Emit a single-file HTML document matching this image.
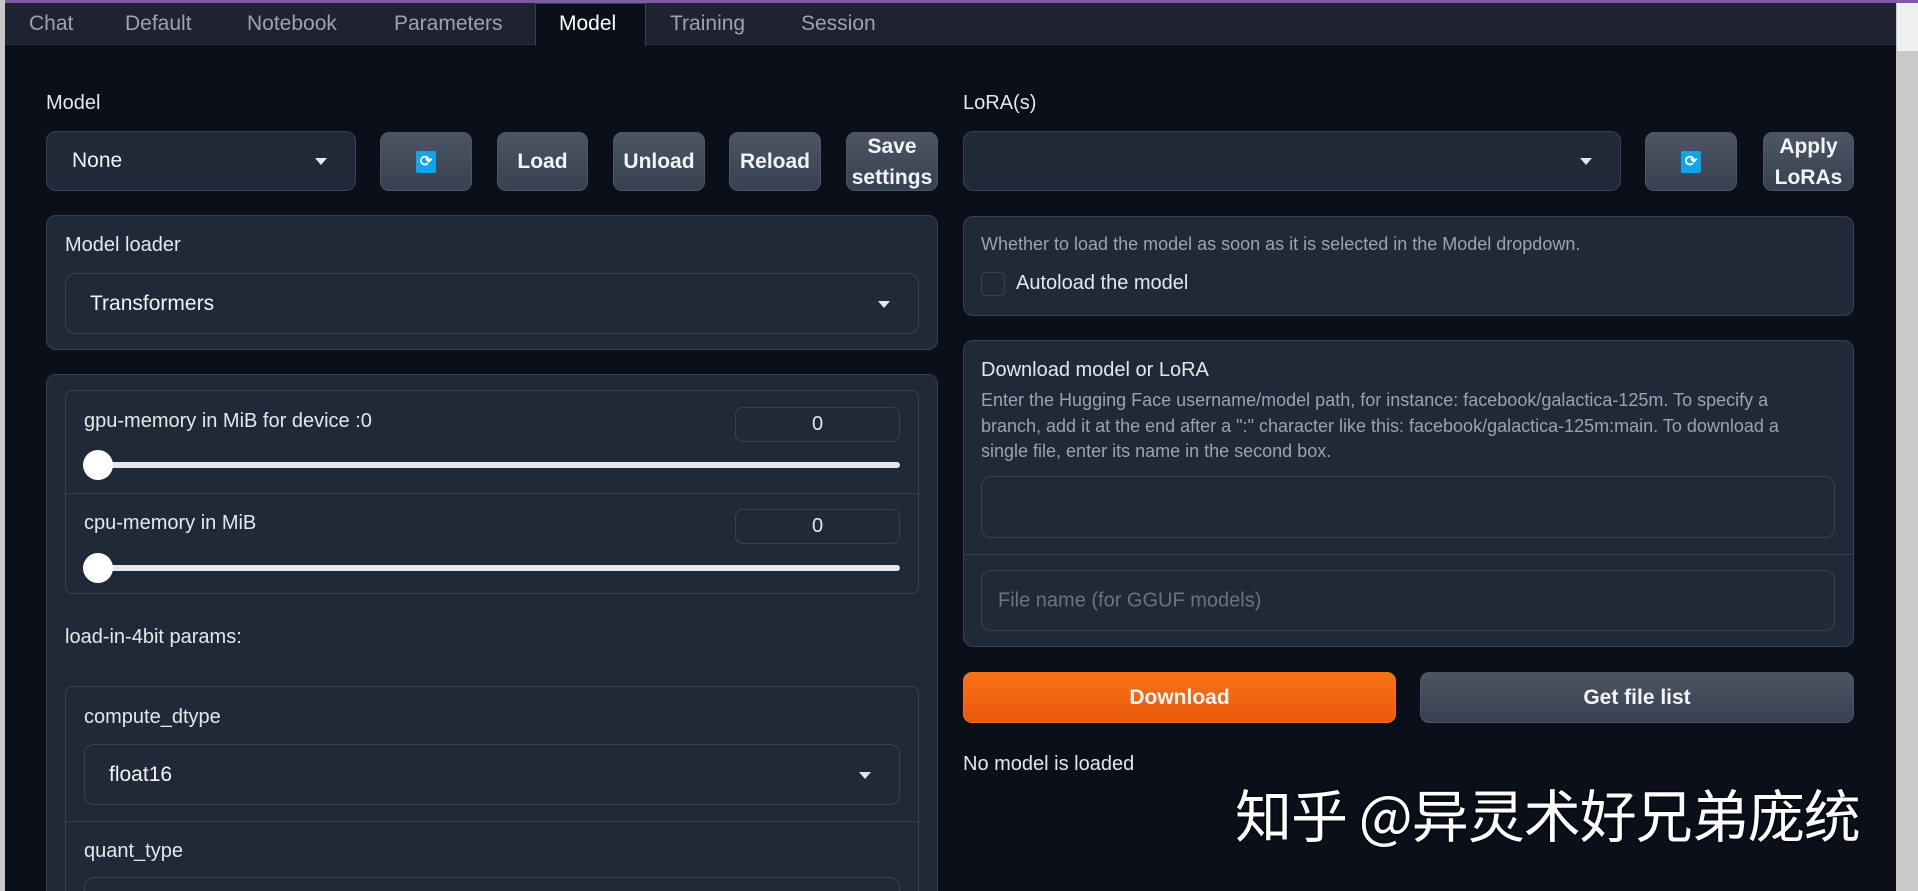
<!DOCTYPE html>
<html style="overflow:hidden;width:1918px;height:891px"><head><meta charset="utf-8"><style>
*{box-sizing:border-box;margin:0;padding:0}
body{width:1918px;height:891px;overflow:hidden;background:#0b0f19;font-family:"Liberation Sans","Noto Sans CJK SC",sans-serif;color:#e5e7eb;position:relative}
.a{position:absolute}
.tabs{left:5px;top:3px;width:1891px;height:42px;background:#1f2230;border-bottom:1px solid #2a2f3d}
.tab{position:absolute;top:12px;font-size:21px;color:#9ca3af}
.panel{position:absolute;background:#1f2937;border:1px solid #374151;border-radius:10px}
.dd{position:absolute;background:#1f2937;border:1px solid #374151;border-radius:10px;font-size:21px;color:#f3f4f6}
.dd span{position:absolute;top:50%;transform:translateY(-50%)}
.arr{position:absolute;right:28px;top:50%;margin-top:-3px;width:0;height:0;border-left:6px solid transparent;border-right:6px solid transparent;border-top:7px solid #e5e7eb}
.btn{position:absolute;border-radius:9px;background:linear-gradient(180deg,#4b5563,#374151);border:1px solid #4b5563;color:#f3f4f6;font-weight:bold;font-size:21px;display:flex;align-items:center;justify-content:center;text-align:center;line-height:31px}
.ref{width:20px;height:22px;background:#0ea5e9;border-radius:2px;color:#fff;font-size:15px;line-height:22px;text-align:center}
.lbl{position:absolute;font-size:20px;color:#e5e7eb}
.num{position:absolute;border:1px solid #374151;border-radius:8px;font-size:20px;text-align:center;line-height:33px;background:#1f2937}
.track{position:absolute;height:6px;background:#e5e7eb;border-radius:3px}
.thumb{position:absolute;width:30px;height:30px;border-radius:50%;background:#fff}
</style></head><body>
<div class="a" style="left:0;top:0;width:1918px;height:3px;background:#7c5aa6"></div>
<div class="a" style="left:0;top:0;width:5px;height:891px;background:#c8c8c8"></div>
<div class="a" style="left:1896px;top:3px;width:22px;height:888px;background:#c9c9c9"></div>
<div class="a" style="left:1897px;top:3px;width:21px;height:48px;background:#f0f0f0"></div>
<div class="a tabs"></div>
<div class="a" style="left:535px;top:3px;width:111px;height:43px;background:#0b0f19;border:1px solid #374151;border-bottom:none"></div>
<div class="tab" style="left:29px">Chat</div>
<div class="tab" style="left:125px">Default</div>
<div class="tab" style="left:247px">Notebook</div>
<div class="tab" style="left:394px">Parameters</div>
<div class="tab" style="left:559px;color:#fff">Model</div>
<div class="tab" style="left:670px">Training</div>
<div class="tab" style="left:801px">Session</div>

<div class="lbl" style="left:46px;top:92px">Model</div>
<div class="dd" style="left:46px;top:131px;width:310px;height:60px"><span style="left:25px">None</span><div class="arr"></div></div>
<div class="btn" style="left:380px;top:132px;width:92px;height:59px"><div class="ref">⟳</div></div>
<div class="btn" style="left:497px;top:132px;width:91px;height:59px">Load</div>
<div class="btn" style="left:613px;top:132px;width:92px;height:59px">Unload</div>
<div class="btn" style="left:729px;top:132px;width:92px;height:59px">Reload</div>
<div class="btn" style="left:846px;top:132px;width:92px;height:59px">Save<br>settings</div>

<div class="panel" style="left:46px;top:215px;width:892px;height:135px"></div>
<div class="lbl" style="left:65px;top:234px">Model loader</div>
<div class="dd" style="left:65px;top:273px;width:854px;height:61px"><span style="left:24px">Transformers</span><div class="arr"></div></div>

<div class="panel" style="left:46px;top:374px;width:892px;height:517px;border-bottom:none;border-radius:10px 10px 0 0"></div>
<div class="panel" style="left:65px;top:390px;width:854px;height:204px;border-radius:8px"></div>
<div class="a" style="left:65px;top:493px;width:854px;height:1px;background:#374151"></div>
<div class="lbl" style="left:84px;top:410px">gpu-memory in MiB for device :0</div>
<div class="num" style="left:735px;top:407px;width:165px;height:35px">0</div>
<div class="track" style="left:90px;top:462px;width:810px"></div>
<div class="thumb" style="left:83px;top:450px"></div>
<div class="lbl" style="left:84px;top:512px">cpu-memory in MiB</div>
<div class="num" style="left:735px;top:509px;width:165px;height:35px">0</div>
<div class="track" style="left:90px;top:565px;width:810px"></div>
<div class="thumb" style="left:83px;top:553px"></div>
<div class="lbl" style="left:65px;top:626px">load-in-4bit params:</div>
<div class="panel" style="left:65px;top:686px;width:854px;height:205px;border-bottom:none;border-radius:8px 8px 0 0"></div>
<div class="a" style="left:65px;top:821px;width:854px;height:1px;background:#374151"></div>
<div class="lbl" style="left:84px;top:706px">compute_dtype</div>
<div class="dd" style="left:84px;top:744px;width:816px;height:61px"><span style="left:24px">float16</span><div class="arr"></div></div>
<div class="lbl" style="left:84px;top:840px">quant_type</div>
<div class="dd" style="left:84px;top:877px;width:816px;height:14px;border-bottom:none;border-radius:10px 10px 0 0"></div>

<div class="lbl" style="left:963px;top:92px">LoRA(s)</div>
<div class="dd" style="left:963px;top:131px;width:658px;height:60px"><div class="arr"></div></div>
<div class="btn" style="left:1645px;top:132px;width:92px;height:59px"><div class="ref">⟳</div></div>
<div class="btn" style="left:1763px;top:132px;width:91px;height:59px">Apply<br>LoRAs</div>

<div class="panel" style="left:963px;top:216px;width:891px;height:100px"></div>
<div class="a" style="left:981px;top:234px;font-size:18px;color:#9ca3af">Whether to load the model as soon as it is selected in the Model dropdown.</div>
<div class="a" style="left:981px;top:272px;width:24px;height:24px;border:1px solid #374151;border-radius:4px;background:#1f2937"></div>
<div class="lbl" style="left:1016px;top:272px">Autoload the model</div>

<div class="panel" style="left:963px;top:340px;width:891px;height:307px"></div>
<div class="lbl" style="left:981px;top:359px">Download model or LoRA</div>
<div class="a" style="left:981px;top:388px;width:900px;font-size:18px;line-height:25.5px;color:#9ca3af;white-space:nowrap">Enter the Hugging Face username/model path, for instance: facebook/galactica-125m. To specify a<br>branch, add it at the end after a ":" character like this: facebook/galactica-125m:main. To download a<br>single file, enter its name in the second box.</div>
<div class="dd" style="left:981px;top:476px;width:854px;height:62px"></div>
<div class="a" style="left:963px;top:554px;width:891px;height:1px;background:#374151"></div>
<div class="dd" style="left:981px;top:570px;width:854px;height:61px;color:#6b7280;font-size:20px"><span style="left:16px">File name (for GGUF models)</span></div>

<div class="btn" style="left:963px;top:672px;width:433px;height:51px;background:linear-gradient(180deg,#f97316,#ea580c);border-color:#f97316">Download</div>
<div class="btn" style="left:1420px;top:672px;width:434px;height:51px">Get file list</div>
<div class="lbl" style="left:963px;top:753px">No model is loaded</div>

<div class="a" style="left:1235px;top:772px;font-size:57px;color:#fff;font-family:'Noto Sans CJK SC','Liberation Sans',sans-serif;text-shadow:0 0 2px #000,0 0 2px #000;white-space:nowrap;letter-spacing:-1px">知乎 @异灵术好兄弟庞统</div>
</body></html>
